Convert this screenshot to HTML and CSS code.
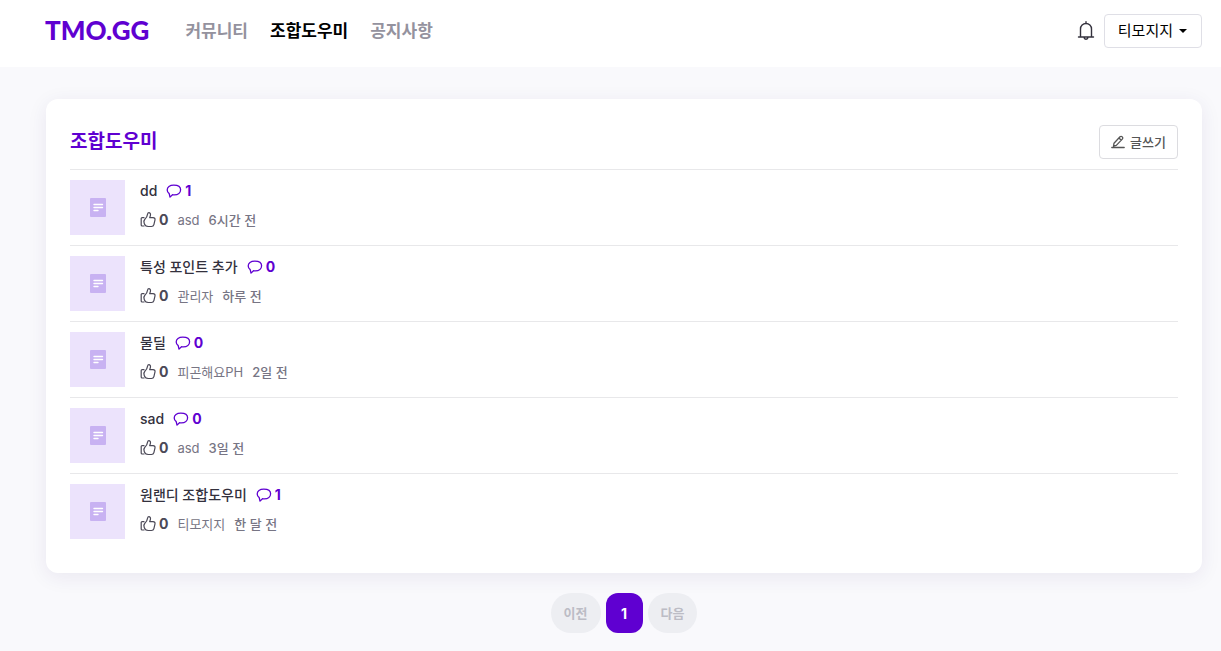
FILE: index.html
```html
<!DOCTYPE html>

<html lang="ko">

<head>
	<meta charset="UTF-8">
	<meta name="viewport" content="width=device-width, initial-scale=1">
	<title>조합도우미 - TMO.GG</title>
	<link rel="stylesheet" href="styles.css">
</head>

<body>

	<!-- shared icons -->
	<svg class="sprite" aria-hidden="true">
		<symbol id="icon-doc" viewBox="0 0 16 20">
			<rect class="doc-page" width="16" height="19" rx="1" />
			<path class="doc-lines" d="M4 6.500h8.500M4 9.500h8.500M4 12.500h4" />
		</symbol>
		<symbol id="icon-comment" viewBox="0 0 16 14">
			<path d="M3.200 9.600C1.900 8.700 1.200 7.500 1.200 6.100c0-3.100 2.500-5 6.600-5s6.800 1.800 6.800 4.700-2.600 5.100-6.200 5.100c-.7 0-1.300 0-1.900-.2L4 13.100z" />
		</symbol>
		<symbol id="icon-like" viewBox="0 0 16 16">
			<path d="M5 7C6.300 5.900 7.200 4.300 7.500 2.300c.2-1 .7-1.600 1.400-1.600 1.100 0 1.700.9 1.600 2.100-.1 1.100-.4 2-.8 2.800h3.400c1.300 0 2.200 1 1.900 2.300l-1.100 4.700c-.3 1.200-1.200 1.900-2.400 1.900H8.200c-1.900 0-3.500-1.200-4-3.100C3.700 9.700 3.900 8.100 5 7z" />
			<path d="M4 5.600H2.200c-.6 0-1 .5-1 1v6.400c0 .6.400 1 1 1H4" />
		</symbol>
	</svg>

	<!-- header -->
	<header class="header">
		<a href="#" class="logo">TMO.GG</a>
		<nav class="nav">
			<a href="#">커뮤니티</a>
			<a href="#" class="active">조합도우미</a>
			<a href="#">공지사항</a>
		</nav>
		<div class="user">
			<button type="button" class="bell" aria-label="알림">
				<svg width="18" height="20" viewBox="0 0 18 20"><path d="M9 .8v1.400M1.500 16h15M3.500 16V8a5.500 5.500 0 0 1 11 0v8M7.200 17a1.900 1.900 0 0 0 3.600 0" /></svg>
			</button>
			<button type="button" class="user-name">
				<span>티모지지</span>
				<svg width="8" height="4" viewBox="0 0 8 4"><path d="M0 0h8L4 4z" /></svg>
			</button>
		</div>
	</header>

	<main class="main">
		<section class="card">
			<div class="card-head">
				<h1>조합도우미</h1>
				<button type="button" class="write">
					<svg width="14" height="14" viewBox="0 0 14 14"><path d="M.8 12.500h12.400M3 8.200 9 1.800a1.500 1.500 0 0 1 2.200 0l.1.1a1.500 1.500 0 0 1 0 2.200L5.300 10.400l-2.800.6zM8 3l2.200 2.200" /></svg>
					<span>글쓰기</span>
				</button>
			</div>

			<ul class="posts">
				<li class="post">
					<a href="#" class="thumb" aria-label="dd"><svg width="16" height="20"><use href="#icon-doc" /></svg></a>
					<div class="post-body">
						<div class="post-title">
							<a href="#">dd</a>
							<span class="comments"><svg width="16" height="14"><use href="#icon-comment" /></svg>1</span>
						</div>
						<div class="post-meta">
							<span class="likes"><svg width="16" height="16"><use href="#icon-like" /></svg>0</span>
							<span class="author">asd</span>
							<span class="time">6시간 전</span>
						</div>
					</div>
				</li>
				<li class="post">
					<a href="#" class="thumb" aria-label="특성 포인트 추가"><svg width="16" height="20"><use href="#icon-doc" /></svg></a>
					<div class="post-body">
						<div class="post-title">
							<a href="#">특성 포인트 추가</a>
							<span class="comments"><svg width="16" height="14"><use href="#icon-comment" /></svg>0</span>
						</div>
						<div class="post-meta">
							<span class="likes"><svg width="16" height="16"><use href="#icon-like" /></svg>0</span>
							<span class="author">관리자</span>
							<span class="time">하루 전</span>
						</div>
					</div>
				</li>
				<li class="post">
					<a href="#" class="thumb" aria-label="물딜"><svg width="16" height="20"><use href="#icon-doc" /></svg></a>
					<div class="post-body">
						<div class="post-title">
							<a href="#">물딜</a>
							<span class="comments"><svg width="16" height="14"><use href="#icon-comment" /></svg>0</span>
						</div>
						<div class="post-meta">
							<span class="likes"><svg width="16" height="16"><use href="#icon-like" /></svg>0</span>
							<span class="author">피곤해요PH</span>
							<span class="time">2일 전</span>
						</div>
					</div>
				</li>
				<li class="post">
					<a href="#" class="thumb" aria-label="sad"><svg width="16" height="20"><use href="#icon-doc" /></svg></a>
					<div class="post-body">
						<div class="post-title">
							<a href="#">sad</a>
							<span class="comments"><svg width="16" height="14"><use href="#icon-comment" /></svg>0</span>
						</div>
						<div class="post-meta">
							<span class="likes"><svg width="16" height="16"><use href="#icon-like" /></svg>0</span>
							<span class="author">asd</span>
							<span class="time">3일 전</span>
						</div>
					</div>
				</li>
				<li class="post">
					<a href="#" class="thumb" aria-label="원랜디 조합도우미"><svg width="16" height="20"><use href="#icon-doc" /></svg></a>
					<div class="post-body">
						<div class="post-title">
							<a href="#">원랜디 조합도우미</a>
							<span class="comments"><svg width="16" height="14"><use href="#icon-comment" /></svg>1</span>
						</div>
						<div class="post-meta">
							<span class="likes"><svg width="16" height="16"><use href="#icon-like" /></svg>0</span>
							<span class="author">티모지지</span>
							<span class="time">한 달 전</span>
						</div>
					</div>
				</li>
			</ul>
		</section>

		<nav class="pagination" aria-label="페이지">
			<button type="button" disabled>이전</button>
			<button type="button" class="current">1</button>
			<button type="button" disabled>다음</button>
		</nav>
	</main>

</body>

</html>
```
FILE: styles.css
```css
*, *:after, *:before { box-sizing: border-box; }
body { margin: 0; background: #f9f9fc; color: #33313d; font-family: Inter, "Noto Sans CJK KR", sans-serif; font-size: 14px; }
a { color: inherit; text-decoration: none; }
button { font-family: inherit; cursor: pointer; }
svg { display: block; flex: none; fill: none; stroke: currentColor; stroke-linecap: round; stroke-linejoin: round; }
.sprite { position: absolute; width: 0; height: 0; }

/* header */
.header { display: flex; align-items: center; height: 67px; padding: 0 19px 5px 45px; background: #fff; }
.logo { padding-bottom: 2px; color: #5f00d1; font-family: Lato, sans-serif; font-size: 26px; font-weight: 900; line-height: 30px; }
.nav { display: flex; gap: 22px; margin-left: 36px; font-size: 17px; font-weight: 700; line-height: 24px; color: #94929e; }
.nav .active { color: #000; }
.user { display: flex; align-items: center; gap: 9px; margin-left: auto; }
.bell { padding: 0; border: 0; background: none; color: #33313d; }
.bell svg { stroke-width: 1.4; }
.user-name { display: flex; align-items: center; gap: 6px; height: 34px; padding: 0 14px 0 13px; border: 1px solid #dfdfe6; border-radius: 4px; background: #fff; color: #000; font-size: 15px; }
.user-name span { padding-bottom: 3px; }
.user-name svg { fill: currentColor; stroke: none; }

/* card */
.main { padding: 32px 19px 18px 46px; }
.card { padding: 26px 24px 24px; border-radius: 12px; background: #fff; box-shadow: 0 4px 20px rgba(50, 30, 100, .08); }
.card-head { display: flex; align-items: center; justify-content: space-between; padding-bottom: 10px; }
.card-head h1 { margin: 0; color: #5f00d1; font-size: 19px; font-weight: 700; line-height: 28px; }
.write { display: flex; align-items: center; gap: 5px; height: 34px; padding: 0 11px; border: 1px solid #dcdce0; border-radius: 4px; background: #fff; color: #555; font-size: 13px; font-weight: 500; }
.write span { padding-bottom: 2px; }
.write svg { stroke-width: 1.3; }

/* posts */
.posts { margin: 0; padding: 0; list-style: none; }
.post { display: flex; gap: 15px; padding: 10px 0; border-top: 1px solid #e8e8ea; }
.thumb { display: flex; align-items: center; justify-content: center; width: 55px; height: 55px; background: #ece3fc; }
.doc-page { fill: #c8b2f2; stroke: none; }
.doc-lines { stroke: #fff; stroke-width: 1.4; }
.post-title, .post-meta { display: flex; align-items: center; gap: 9px; line-height: 22px; }
.post-title { font-weight: 500; }
.post-meta { margin-top: 7px; color: #777584; font-size: 13px; }
.comments, .likes { display: flex; align-items: center; gap: 3px; font-size: 14px; font-weight: 700; }
.comments { color: #5f00d1; }
.comments svg { stroke-width: 1.3; }
.likes { color: #4b4957; }
.likes svg { stroke-width: 1.2; }
.time { font-weight: 500; }

/* pagination */
.pagination { display: flex; justify-content: center; gap: 5px; padding-top: 20px; }
.pagination button { height: 40px; padding: 0 13px 2px; border: 0; border-radius: 20px; background: #edeef2; color: #bcbcc5; font-size: 13px; font-weight: 700; }
.pagination .current { width: 37px; padding: 0; border-radius: 12px; background: #5f00d1; color: #fff; font-size: 14px; }
```
